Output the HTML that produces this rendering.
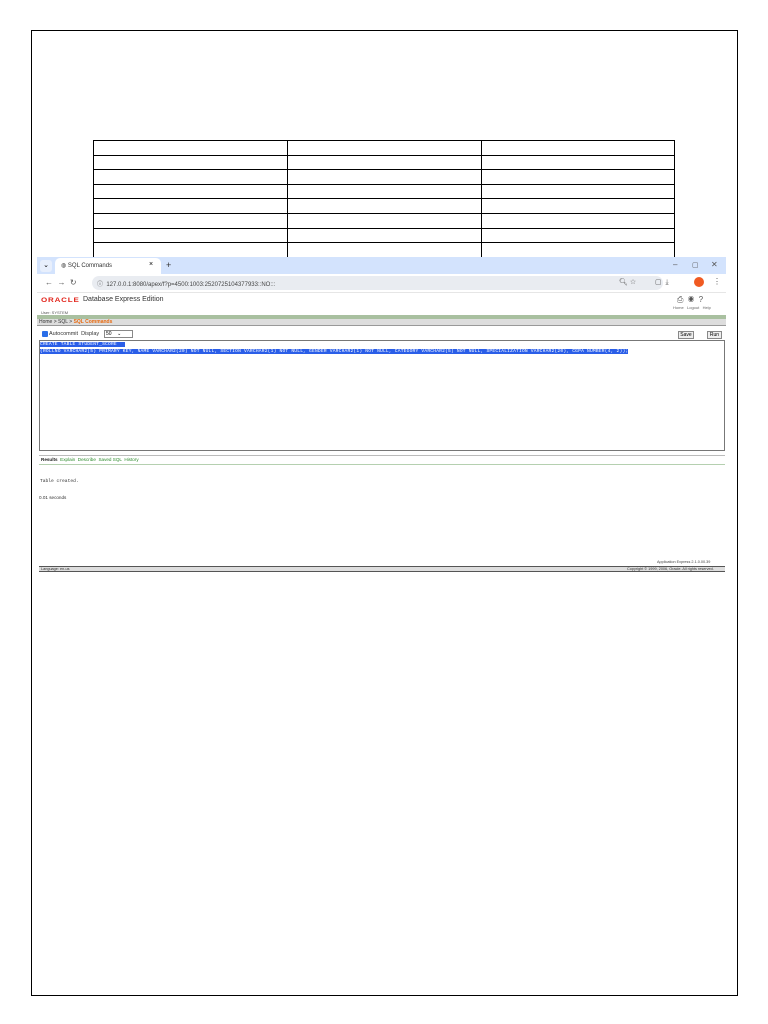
<!DOCTYPE html>
<html><head><meta charset="utf-8"><style>
*{margin:0;padding:0;box-sizing:border-box}
body{width:768px;height:1024px;background:#fff;position:relative;font-family:"Liberation Sans",sans-serif;overflow:hidden}
.a{position:absolute}
.m{font-family:"Liberation Mono",monospace}
</style></head><body>
<div class="a" style="left:31px;top:30px;width:707px;height:966px;border:1px solid #000"></div>
<div class="a" style="left:93px;top:140px;width:582px;height:118px;border:1px solid #000;border-bottom:none"></div>
<div class="a" style="left:287px;top:140px;width:1px;height:118px;background:#000"></div>
<div class="a" style="left:481px;top:140px;width:1px;height:118px;background:#000"></div>
<div class="a" style="left:93px;top:155px;width:582px;height:1px;background:#000"></div>
<div class="a" style="left:93px;top:169px;width:582px;height:1px;background:#000"></div>
<div class="a" style="left:93px;top:184px;width:582px;height:1px;background:#000"></div>
<div class="a" style="left:93px;top:198px;width:582px;height:1px;background:#000"></div>
<div class="a" style="left:93px;top:213px;width:582px;height:1px;background:#000"></div>
<div class="a" style="left:93px;top:228px;width:582px;height:1px;background:#000"></div>
<div class="a" style="left:93px;top:242px;width:582px;height:1px;background:#000"></div>
<div class="a" style="left:37px;top:257px;width:689px;height:316px;background:#fff;overflow:hidden">
 <div class="a" style="left:0;top:0;width:689px;height:17px;background:#d3e3fd"></div>
 <div class="a" style="left:3px;top:3px;width:12px;height:12px;background:#e8effc;border-radius:3px;font-size:7px;text-align:center;line-height:12px">⌄</div>
 <div class="a" style="left:18px;top:1px;width:106px;height:16px;background:#fff;border-radius:5px 5px 0 0"></div>
 <div class="a" style="left:24px;top:5px;font-size:6px;color:#333">◍ SQL Commands</div>
 <div class="a" style="left:112px;top:4px;font-size:7px">×</div>
 <div class="a" style="left:129px;top:3px;font-size:9px;color:#333">+</div>
 <div class="a" style="left:636px;top:3px;font-size:8px;color:#555">–</div>
 <div class="a" style="left:655px;top:4px;font-size:7px;color:#555">▢</div>
 <div class="a" style="left:674px;top:3px;font-size:8px;color:#555">✕</div>
 <div class="a" style="left:8px;top:21px;font-size:8px;color:#555">←&nbsp;&nbsp;→&nbsp;&nbsp;↻</div>
 <div class="a" style="left:55px;top:19px;width:571px;height:14px;background:#e9ecf1;border-radius:7px"></div>
 <div class="a" style="left:60px;top:22px;font-size:6px;color:#444">ⓘ &nbsp;127.0.0.1:8080/apex/f?p=4500:1003:2520725104377933::NO:::</div>
 <div class="a" style="left:582px;top:21px;font-size:7px;color:#555">🔍︎ ☆</div>
 <div class="a" style="left:618px;top:21px;font-size:7px;color:#555">▢ &nbsp;⤓</div>
 <div class="a" style="left:657px;top:20px;width:10px;height:10px;border-radius:50%;background:#f05a22"></div>
 <div class="a" style="left:676px;top:20px;font-size:8px;color:#555">⋮</div>
 <div class="a" style="left:0;top:35px;width:689px;height:1px;background:#e6e6e6"></div>
 <div class="a" style="left:4px;top:39px;font-size:8px;color:#e2231a;font-weight:bold;letter-spacing:.8px;transform:scaleY(.85);transform-origin:left top">ORACLE</div>
 <div class="a" style="left:46px;top:39px;font-size:7px;color:#333">Database Express Edition</div>
 <div class="a" style="left:640px;top:38px;font-size:8px;color:#555">⎙ &nbsp;◉ &nbsp;?</div>
 <div class="a" style="left:636px;top:48px;font-size:4px;color:#666">Home &nbsp; Logout &nbsp; Help</div>
 <div class="a" style="left:4px;top:53px;font-size:4px;color:#555">User: SYSTEM</div>
 <div class="a" style="left:0;top:58px;width:689px;height:4px;background:#a9c0a0"></div>
 <div class="a" style="left:0;top:62px;width:689px;height:7px;background:#ddd;border-bottom:1px solid #999"></div>
 <div class="a" style="left:2px;top:62px;font-size:5px;color:#333">Home &gt; SQL &gt; <span style="color:#e86a10;font-weight:bold">SQL Commands</span></div>
 <div class="a" style="left:5px;top:74px;width:6px;height:6px;background:#2a6ee8;border-radius:1px"></div>
 <div class="a" style="left:12px;top:74px;font-size:5.5px;color:#333">Autocommit &nbsp;Display</div>
 <div class="a" style="left:67px;top:73px;width:29px;height:8px;border:1px solid #888;font-size:5px;padding-left:1px">50 &nbsp;&nbsp;&nbsp;⌄</div>
 <div class="a" style="left:641px;top:74px;width:16px;height:8px;border:1px solid #888;background:#eee;font-size:5px;text-align:center">Save</div>
 <div class="a" style="left:670px;top:74px;width:15px;height:8px;border:1px solid #888;background:#eee;font-size:5px;text-align:center">Run</div>
 <div class="a" style="left:2px;top:83px;width:686px;height:111px;border:1px solid #777"></div>
 <div class="a m" style="left:3px;top:84px;font-size:4.6px;line-height:7px;color:#fff;letter-spacing:.2px;white-space:nowrap">
  <span style="background:#2a5ee8;padding-right:8px">CREATE TABLE STUDENT_SCORE </span><br>
  <span style="background:#2a5ee8">(ROLLNO VARCHAR2(5) PRIMARY KEY, NAME VARCHAR2(20) NOT NULL, SECTION VARCHAR2(1) NOT NULL, GENDER VARCHAR2(1) NOT NULL, CATEGORY VARCHAR2(5) NOT NULL, SPECIALIZATION VARCHAR2(20), CGPA NUMBER(4, 2));</span>
 </div>
 <div class="a" style="left:2px;top:198px;width:686px;height:1px;background:#bbb"></div>
 <div class="a" style="left:4px;top:200px;font-size:4.6px;color:#2a8a2a"><b style="color:#222">Results</b>&nbsp; Explain &nbsp;Describe &nbsp;Saved SQL &nbsp;History</div>
 <div class="a" style="left:2px;top:207px;width:686px;height:1px;background:#b5d0b0"></div>
 <div class="a m" style="left:3px;top:222px;font-size:4.6px;color:#333">Table created.</div>
 <div class="a" style="left:2px;top:238px;font-size:4.6px;color:#333">0.01 seconds</div>
 <div class="a" style="left:620px;top:303px;font-size:3.8px;color:#444">Application Express 2.1.0.00.39</div>
 <div class="a" style="left:2px;top:309px;width:686px;height:6px;background:#ddd;border-top:1px solid #555;border-bottom:1px solid #555"></div>
 <div class="a" style="left:4px;top:310px;font-size:3.8px;color:#333">Language: en-us</div>
 <div class="a" style="left:590px;top:310px;font-size:3.8px;color:#333">Copyright © 1999, 2006, Oracle. All rights reserved.</div>
</div>
</body></html>
